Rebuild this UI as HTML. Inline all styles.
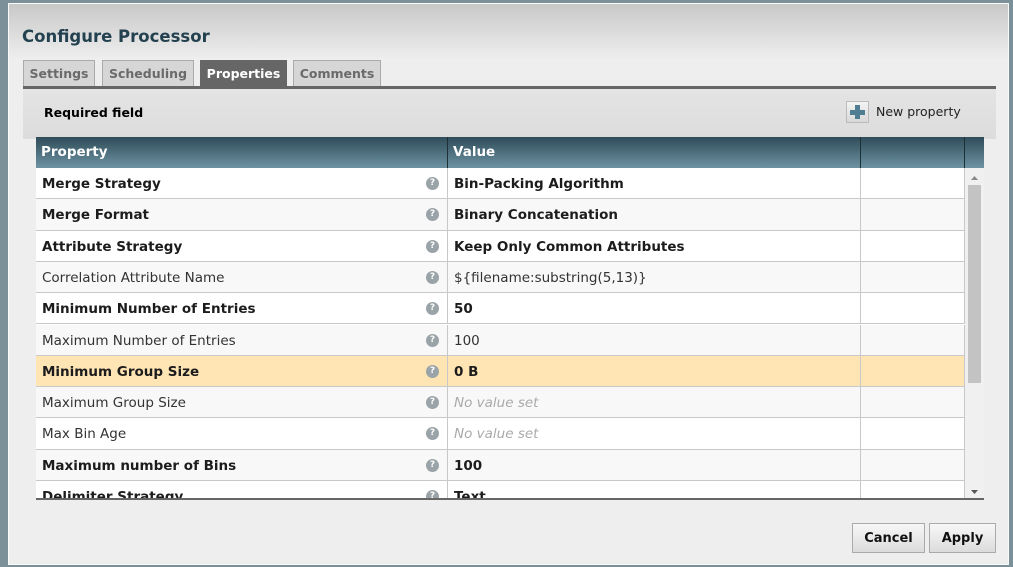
<!DOCTYPE html>
<html><head><style>
*{box-sizing:border-box;margin:0;padding:0}
body{width:1013px;height:567px;background:#7b9099;position:relative;overflow:hidden;font-family:"DejaVu Sans","Liberation Sans",sans-serif;font-size:13px;color:#262626}
.dlg{position:absolute;left:8px;top:3px;width:1001px;height:562px;background:linear-gradient(#c8c8c8 0px,#eeeeee 55px,#eeeeee);border:1px solid #fafafa}
.title{position:absolute;left:13px;top:23px;font-size:16.5px;font-weight:bold;color:#23414f}
.tab{position:absolute;top:56px;height:26px;background:#d6d6d6;border:1px solid #aaa;border-bottom:none;font-size:12.5px;font-weight:bold;color:#6a6a6a;line-height:25px;text-align:center}
.tab.act{background:#666;color:#fff;border-color:#666}
.bar{position:absolute;left:14px;top:82px;width:973px;height:3px;background:#666}
.panel{position:absolute;left:14px;top:85px;width:973px;height:50px;background:linear-gradient(#e4e4e4,#dcdcdc)}
.req{position:absolute;left:21px;top:16px;font-weight:bold;font-size:12.5px;color:#000}
.np{position:absolute;left:823px;top:12px;width:23px;height:22px;background:linear-gradient(#f4f4f4,#d8d8d8);border:1px solid #bbb}
.npl{position:absolute;left:853px;top:15px;font-size:12.5px;color:#222}
.tbl{position:absolute;left:27px;top:133px;width:948px;height:363px;background:#fff;border-bottom:2px solid #666;overflow:hidden}
.hdr{position:absolute;left:0;top:0;width:948px;height:31px;background:linear-gradient(#2f4c59,#6d93a3)}
.hdr div{position:absolute;top:0;height:31px;color:#fff;font-weight:bold;font-size:13.5px;line-height:31px;padding-left:5px;border-right:1px solid #1f2f36}
.row{position:absolute;left:0;width:929px;height:31.3px;border-bottom:1px solid #c8c8c8}
.row div{position:absolute;top:0;height:31px;line-height:32px;padding-left:6px;border-right:1px solid #c8c8c8;font-size:13.5px;color:#333}
.b div{font-weight:bold;color:#1c1c1c}
.q{position:absolute;left:390px;top:9px;width:13px;height:13px;border-radius:50%;background:#9aa3a8;color:#fff;font-size:9px;line-height:13px;text-align:center;font-weight:bold}
.nv{font-style:italic;color:#aaa!important;font-weight:normal!important}
.sb{position:absolute;left:929px;top:31px;width:19px;height:332px;background:#f0f0f0}
.btn{position:absolute;top:519px;height:30px;background:linear-gradient(#f7f7f7,#dcdcdc);border:1px solid #aaa;font-weight:bold;font-size:13px;color:#111;text-align:center;line-height:30px}
</style></head><body>
<div class="dlg">
<div class="title">Configure Processor</div>
<div class="tab" style="left:14px;width:72px">Settings</div>
<div class="tab" style="left:93px;width:92px">Scheduling</div>
<div class="tab act" style="left:191px;width:87px">Properties</div>
<div class="tab" style="left:284px;width:88px">Comments</div>
<div class="bar"></div>
<div class="panel"><div class="req">Required field</div>
<div class="np"><svg width="21" height="20"><rect x="8" y="3" width="5" height="14" fill="#4f7d92"/><rect x="3" y="8" width="15" height="5" fill="#4f7d92"/></svg></div>
<div class="npl">New property</div></div>
<div class="tbl">
<div class="hdr"><div style="left:0;width:412px">Property</div><div style="left:412px;width:413px">Value</div><div style="left:825px;width:104px"></div></div>
<div class="sb"><svg width="19" height="332"><path d="M6 12h7l-3.5-4z" fill="#888"/><rect x="3" y="17" width="13" height="198" fill="#c3c3c3"/><path d="M6 322h7l-3.5 4z" fill="#555"/></svg></div>
<div class="row b" style="top:31px;background:#fff"><div style="left:0;width:412px">Merge Strategy<span class="q">?</span></div><div style="left:412px;width:413px">Bin-Packing Algorithm</div><div style="left:825px;width:104px"></div></div>
<div class="row b" style="top:62.3px;background:#f8f8f8"><div style="left:0;width:412px">Merge Format<span class="q">?</span></div><div style="left:412px;width:413px">Binary Concatenation</div><div style="left:825px;width:104px"></div></div>
<div class="row b" style="top:93.6px;background:#fff"><div style="left:0;width:412px">Attribute Strategy<span class="q">?</span></div><div style="left:412px;width:413px">Keep Only Common Attributes</div><div style="left:825px;width:104px"></div></div>
<div class="row" style="top:124.9px;background:#f8f8f8"><div style="left:0;width:412px">Correlation Attribute Name<span class="q">?</span></div><div style="left:412px;width:413px">${filename:substring(5,13)}</div><div style="left:825px;width:104px"></div></div>
<div class="row b" style="top:156.2px;background:#fff"><div style="left:0;width:412px">Minimum Number of Entries<span class="q">?</span></div><div style="left:412px;width:413px">50</div><div style="left:825px;width:104px"></div></div>
<div class="row" style="top:187.5px;background:#f8f8f8"><div style="left:0;width:412px">Maximum Number of Entries<span class="q">?</span></div><div style="left:412px;width:413px">100</div><div style="left:825px;width:104px"></div></div>
<div class="row b" style="top:218.8px;background:#ffe5b4"><div style="left:0;width:412px">Minimum Group Size<span class="q">?</span></div><div style="left:412px;width:413px">0 B</div><div style="left:825px;width:104px"></div></div>
<div class="row" style="top:250.1px;background:#f8f8f8"><div style="left:0;width:412px">Maximum Group Size<span class="q">?</span></div><div class="nv" style="left:412px;width:413px">No value set</div><div style="left:825px;width:104px"></div></div>
<div class="row" style="top:281.4px;background:#fff"><div style="left:0;width:412px">Max Bin Age<span class="q">?</span></div><div class="nv" style="left:412px;width:413px">No value set</div><div style="left:825px;width:104px"></div></div>
<div class="row b" style="top:312.7px;background:#f8f8f8"><div style="left:0;width:412px">Maximum number of Bins<span class="q">?</span></div><div style="left:412px;width:413px">100</div><div style="left:825px;width:104px"></div></div>
<div class="row b" style="top:344px;background:#fff"><div style="left:0;width:412px">Delimiter Strategy<span class="q">?</span></div><div style="left:412px;width:413px">Text</div><div style="left:825px;width:104px"></div></div>
</div>
<div class="btn" style="left:843px;width:73px">Cancel</div>
<div class="btn" style="left:920px;width:67px">Apply</div>
</div>
</body></html>
